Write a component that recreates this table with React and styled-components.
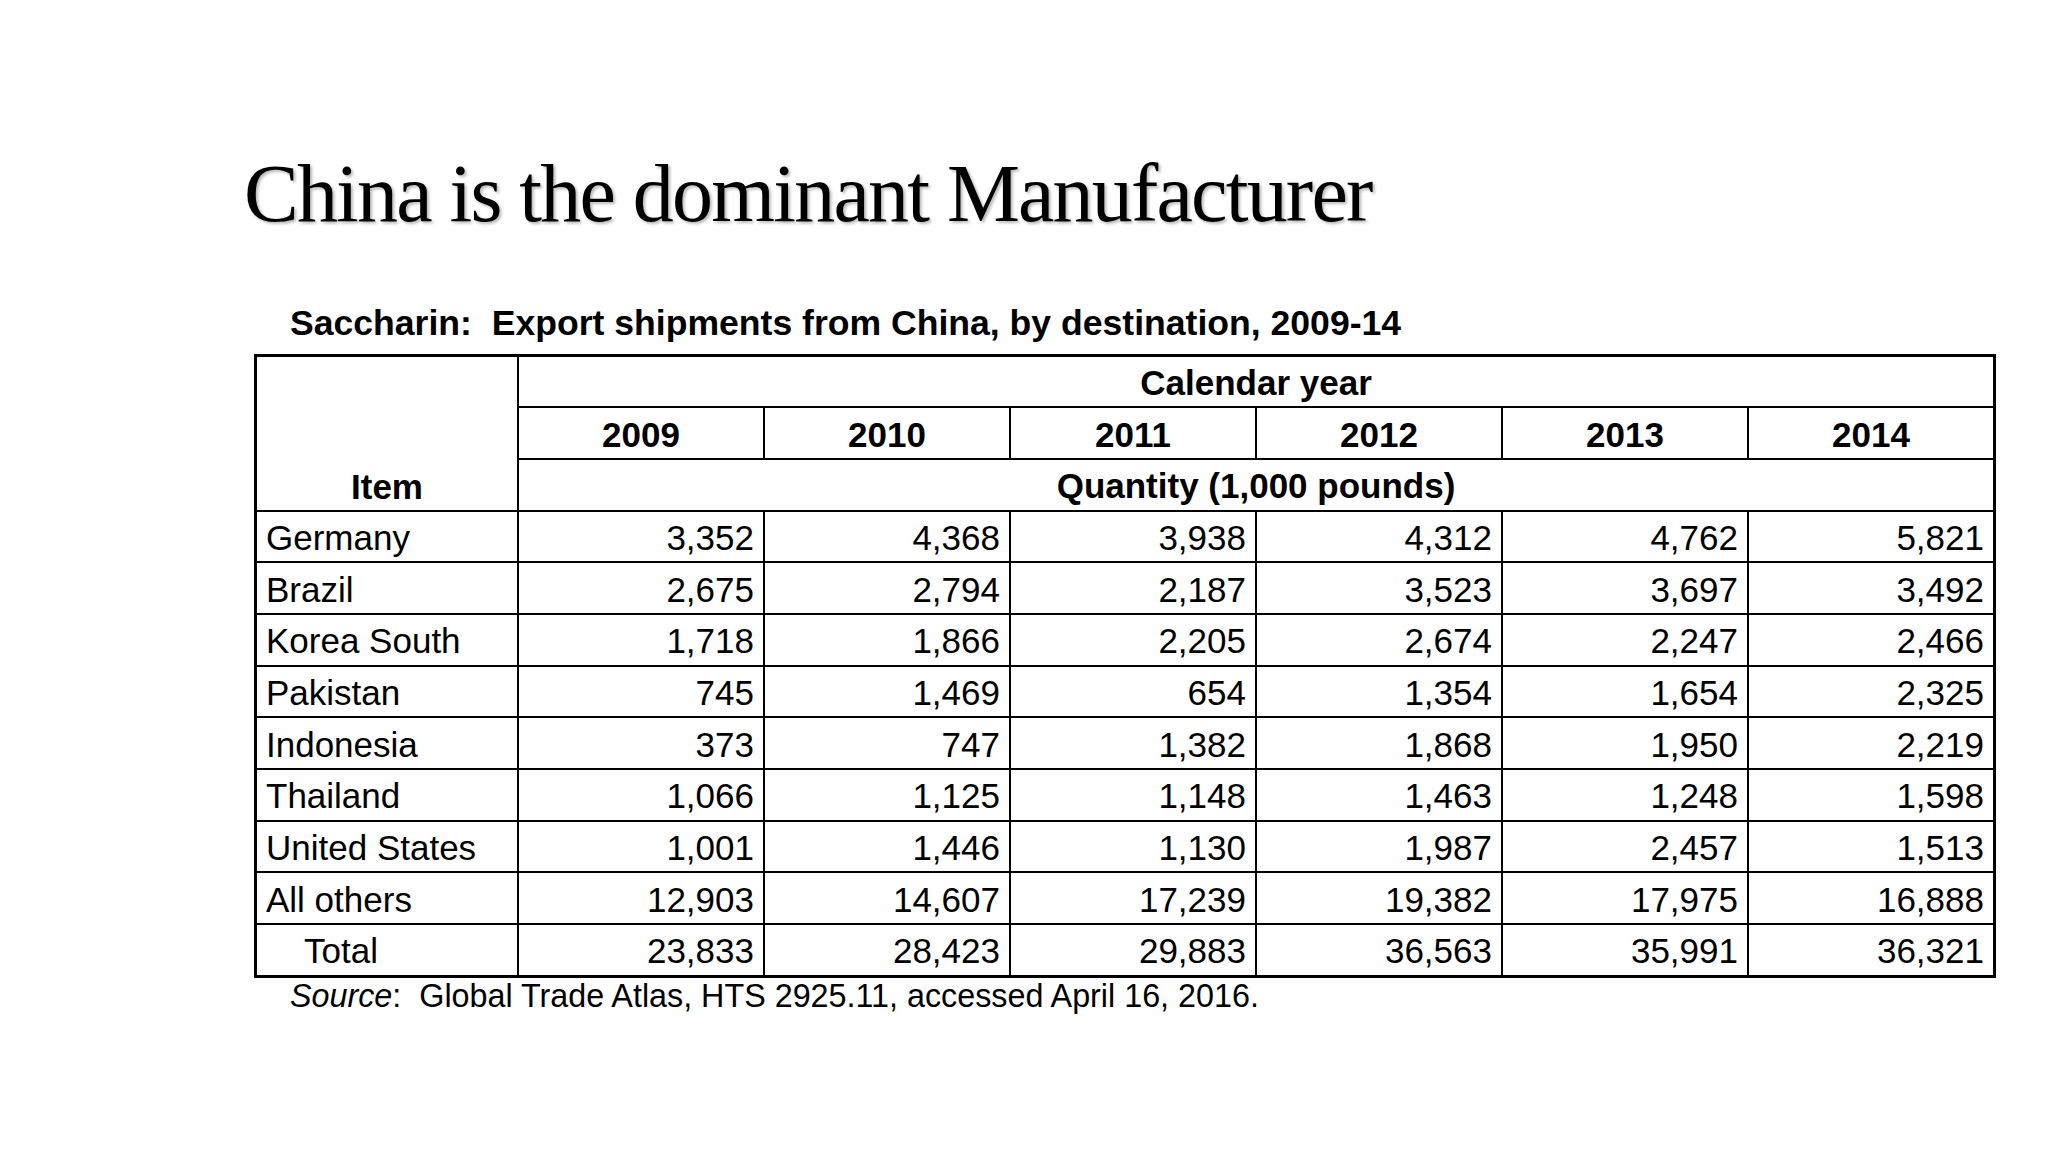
import React from "react";
import styled, { createGlobalStyle } from "styled-components";

const Global = createGlobalStyle`
  html, body { margin: 0; padding: 0; background: #ffffff; }
  #root { width: 2048px; height: 1152px; overflow: hidden; }
`;

const Slide = styled.div`
  width: 2048px;
  height: 1152px;
  box-sizing: border-box;
  padding-top: 153px;
  display: flex;
  flex-direction: column;
  align-items: flex-start;
  background: #ffffff;
  color: #000;
`;

const Title = styled.h1`
  margin: 0 0 0 244px;
  font-family: "Liberation Serif", "Times New Roman", serif;
  font-weight: 400;
  font-size: 82px;
  line-height: 1;
  letter-spacing: -1.8px;
  color: #000;
  text-shadow: 2px 2px 3px rgba(0, 0, 0, 0.28);
`;

const Caption = styled.div`
  margin: 71px 0 0 290px;
  font-family: "Liberation Sans", Arial, sans-serif;
  font-weight: 700;
  font-size: 35.6px;
  line-height: 1;
  white-space: pre;
`;

const Grid = styled.div`
  margin: 12px 0 0 254px;
  width: 1742px;
  height: 624px;
  box-sizing: border-box;
  border: 3px solid #000;
  background: #000;
  display: grid;
  grid-template-columns: 260px repeat(6, 1fr);
  grid-template-rows: repeat(12, 1fr);
  gap: 2px;
  font-family: "Liberation Sans", Arial, sans-serif;
  font-size: 35px;
  line-height: 1;
`;

const Cell = styled.div`
  background: #fff;
  display: flex;
  align-items: ${(p) => (p.$bottom ? "flex-end" : "center")};
  justify-content: ${(p) =>
    p.$align === "right" ? "flex-end" : p.$align === "center" ? "center" : "flex-start"};
  padding: ${(p) => (p.$bottom ? "0 0 6px 0" : "2px 9px 0")};
  padding-left: ${(p) => (p.$indent ? "47px" : undefined)};
  font-weight: ${(p) => (p.$bold ? 700 : 400)};
  white-space: nowrap;
`;

const ItemHead = styled(Cell)`
  grid-column: 1;
  grid-row: 1 / span 3;
`;

const SpanHead = styled(Cell)`
  grid-column: 2 / span 6;
`;

const Source = styled.div`
  margin: 2px 0 0 290px;
  font-family: "Liberation Sans", Arial, sans-serif;
  font-size: 32.3px;
  line-height: 1;
  white-space: pre;
`;

const years = ["2009", "2010", "2011", "2012", "2013", "2014"];

const rows = [
  ["Germany", "3,352", "4,368", "3,938", "4,312", "4,762", "5,821"],
  ["Brazil", "2,675", "2,794", "2,187", "3,523", "3,697", "3,492"],
  ["Korea South", "1,718", "1,866", "2,205", "2,674", "2,247", "2,466"],
  ["Pakistan", "745", "1,469", "654", "1,354", "1,654", "2,325"],
  ["Indonesia", "373", "747", "1,382", "1,868", "1,950", "2,219"],
  ["Thailand", "1,066", "1,125", "1,148", "1,463", "1,248", "1,598"],
  ["United States", "1,001", "1,446", "1,130", "1,987", "2,457", "1,513"],
  ["All others", "12,903", "14,607", "17,239", "19,382", "17,975", "16,888"],
  ["Total", "23,833", "28,423", "29,883", "36,563", "35,991", "36,321"],
];

export default function App() {
  return (
    <>
      <Global />
      <Slide>
        <Title>China is the dominant Manufacturer</Title>
        <Caption>{"Saccharin:  Export shipments from China, by destination, 2009-14"}</Caption>
        <Grid>
          <ItemHead $bold $align="center" $bottom>Item</ItemHead>
          <SpanHead $bold $align="center">Calendar year</SpanHead>
          {years.map((y) => (
            <Cell key={y} $bold $align="center">{y}</Cell>
          ))}
          <SpanHead $bold $align="center">Quantity (1,000 pounds)</SpanHead>
          {rows.map((r) =>
            r.map((v, i) => (
              <Cell
                key={r[0] + i}
                $align={i === 0 ? "left" : "right"}
                $indent={i === 0 && r[0] === "Total"}
              >
                {v}
              </Cell>
            ))
          )}
        </Grid>
        <Source>
          <i>Source</i>
          {":  Global Trade Atlas, HTS 2925.11, accessed April 16, 2016."}
        </Source>
      </Slide>
    </>
  );
}
